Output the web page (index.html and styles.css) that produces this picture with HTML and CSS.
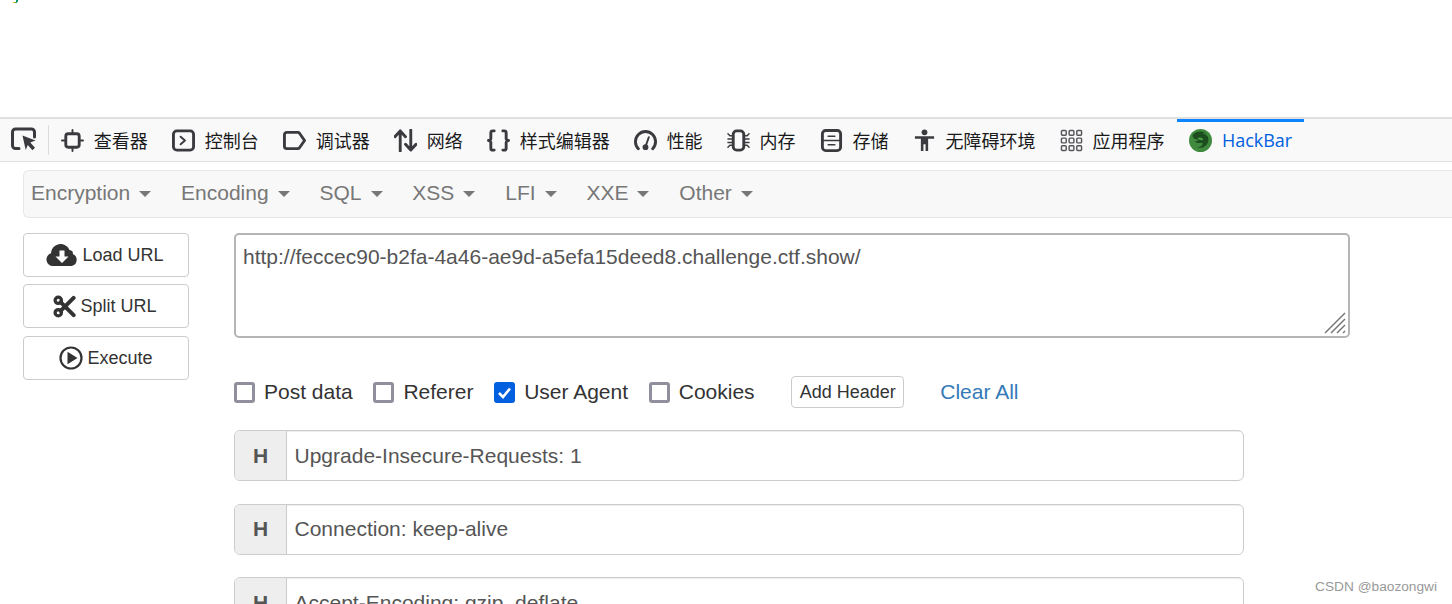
FILE: index.html
```html
<!DOCTYPE html>
<html lang="zh">
<head>
<meta charset="utf-8">
<title>HackBar</title>
<link rel="stylesheet" href="styles.css">
</head>
<body>
<div class="page-top">
  <svg class="top-mark" width="5" height="3" viewBox="0 0 5 3"><rect x="3" width="2" height="2" fill="#0a9a78"/><rect y="2" width="2" height="1" fill="#e0b020"/><rect x="2" y="2" width="2" height="1" fill="#3aa040"/></svg>
</div>
<div class="toolbar">
  <div class="picker">
    <svg class="ico-picker" width="26" height="24" viewBox="0 0 26 24"><path d="M8 21.500H4.500a3 3 0 0 1-3-3V5a3 3 0 0 1 3-3h16a3 3 0 0 1 3 3v5" class="st bold"/><path d="M11.500 8.500l13 5-5.200 2.100 4.700 5.200-2.600 2.400-4.600-5.200-2.100 5z" class="fi"/></svg>
  </div>
  <div class="tab">
    <svg class="ico" viewBox="0 0 24 24"><rect x="5" y="5" width="14" height="14" rx="2.500" class="st bold"/><path d="M12 1v4M12 19v4M1 12h4M19 12h4" class="st thin"/></svg>
    <span>查看器</span>
  </div>
  <div class="tab">
    <svg class="ico" viewBox="0 0 24 24"><rect x="1.500" y="2" width="21" height="20" rx="3.500" class="st bold"/><path d="M9 8l4.500 4L9 16" class="st thin"/></svg>
    <span>控制台</span>
  </div>
  <div class="tab">
    <svg class="ico" viewBox="0 0 24 24"><path d="M4 3.500h11.500a2 2 0 0 1 1.500.700L22.500 12 17 19.800a2 2 0 0 1-1.500.700H4A2.500 2.500 0 0 1 1.500 18V6A2.500 2.500 0 0 1 4 3.500z" class="st bold"/></svg>
    <span>调试器</span>
  </div>
  <div class="tab">
    <svg class="ico" viewBox="0 0 24 24"><path d="M6.500 23V2M1 8l5.500-6L12 8M17.500 1v21M12 16l5.500 6L23 16" class="st bold"/></svg>
    <span>网络</span>
  </div>
  <div class="tab">
    <svg class="ico" viewBox="0 0 24 24"><path d="M7.500 2H6a2 2 0 0 0-2 2v5a2.500 2.500 0 0 1-2.500 3A2.500 2.500 0 0 1 4 15v5a2 2 0 0 0 2 2h1.500M16.500 2H18a2 2 0 0 1 2 2v5a2.500 2.500 0 0 0 2.500 3A2.500 2.500 0 0 0 20 15v5a2 2 0 0 1-2 2h-1.500" class="st bold"/></svg>
    <span>样式编辑器</span>
  </div>
  <div class="tab">
    <svg class="ico" viewBox="0 0 24 24"><path d="M4.500 20.500A10.500 10.500 0 1 1 19.500 20.500" class="st bold"/><path d="M15.500 8.500L12.500 17" class="st thin"/><circle cx="12" cy="19" r="3" class="fi"/></svg>
    <span>性能</span>
  </div>
  <div class="tab">
    <svg class="ico" viewBox="0 0 24 24"><rect x="6.500" y="2" width="11" height="20" rx="3.500" class="st bold"/><path d="M6 7H3L1 5M6 10.500H1M6 14H1M6 17H3L1 19M18 7h3l2-2M18 10.500h5M18 14h5M18 17h3l2 2" class="st hair"/></svg>
    <span>内存</span>
  </div>
  <div class="tab">
    <svg class="ico" viewBox="0 0 24 24"><rect x="2.500" y="1.500" width="19" height="21" rx="3.500" class="st bold"/><path d="M8.500 7.500h7M8.500 16.500h7M3 12h18" class="st hair"/></svg>
    <span>存储</span>
  </div>
  <div class="tab">
    <svg class="ico" viewBox="0 0 24 24"><circle cx="12" cy="3.500" r="3" class="fi"/><path d="M2 7.500h20v2.800h-6.200V23h-2.700v-7h-2.200v7H8.200V10.300H2z" class="fi"/></svg>
    <span>无障碍环境</span>
  </div>
  <div class="tab">
    <svg class="ico" viewBox="0 0 24 24"><g class="st hair grey"><rect x="1.500" y="1.500" width="5" height="5" rx="1"/><rect x="9.500" y="1.500" width="5" height="5" rx="1"/><rect x="17.500" y="1.500" width="5" height="5" rx="1"/><rect x="1.500" y="9.500" width="5" height="5" rx="1"/><rect x="9.500" y="9.500" width="5" height="5" rx="1"/><rect x="17.500" y="9.500" width="5" height="5" rx="1"/><rect x="1.500" y="17.500" width="5" height="5" rx="1"/><rect x="9.500" y="17.500" width="5" height="5" rx="1"/><rect x="17.500" y="17.500" width="5" height="5" rx="1"/></g></svg>
    <span>应用程序</span>
  </div>
  <div class="tab tab-active">
    <svg class="ico" viewBox="0 0 24 24"><circle cx="12" cy="12" r="12" fill="#3f8a3c"/><path d="M4 6c4-5 12-4 15-1-2-1-4-1-5 0 5 0 7 4 6 8-1 5-7 8-12 6 4 0 7-2 6-5-2 1-6 1-8-1 2 0 4-1 4-2-4 0-7-2-6-5z" fill="#1b4d1e"/><path d="M9 10c2-2 5-1 6 1-1 1-4 1-6-1z" fill="#4f9f48"/></svg>
    <span class="tab-label-latin">HackBar</span>
  </div>
</div>

<div class="panel">
  <nav class="menubar">
    <div class="menu">Encryption<i class="caret"></i></div>
    <div class="menu">Encoding<i class="caret"></i></div>
    <div class="menu">SQL<i class="caret"></i></div>
    <div class="menu">XSS<i class="caret"></i></div>
    <div class="menu">LFI<i class="caret"></i></div>
    <div class="menu">XXE<i class="caret"></i></div>
    <div class="menu">Other<i class="caret"></i></div>
  </nav>
  <div class="workspace">
    <aside class="actions">
      <div class="btn">
        <svg class="btn-ico cloud" viewBox="0 0 32 24"><path d="M7 23a6.500 6.500 0 0 1-2-12.700C5.300 4.500 10 1 14.500 1c4 0 7.500 2.500 9 6a5 5 0 0 1 3 1.500c.5 1.300.5 1.800.3 2.500A6.300 6.300 0 0 1 25.500 23z" fill="#333"/><path d="M13.500 7.500h5v6h4L16 20l-6.500-6.500h4z" fill="#fff"/></svg>
        <span>Load URL</span>
      </div>
      <div class="btn">
        <svg class="btn-ico scissors" viewBox="0 0 24 24"><circle cx="5.500" cy="5.500" r="3.300" fill="none" stroke="#333" stroke-width="3.400"/><circle cx="5.500" cy="18.500" r="3.300" fill="none" stroke="#333" stroke-width="3.400"/><path d="M8 7.500L21.500 21M8 16.500L21.500 3" fill="none" stroke="#333" stroke-width="4.200" stroke-linecap="round"/></svg>
        <span>Split URL</span>
      </div>
      <div class="btn">
        <svg class="btn-ico play" viewBox="0 0 24 24"><circle cx="12" cy="12" r="10.500" fill="none" stroke="#333" stroke-width="2.200"/><path d="M8.500 5.800L18.500 12l-10 6.200z" fill="#333"/></svg>
        <span>Execute</span>
      </div>
    </aside>
    <section class="form">
      <div class="url-box">
        <span>http://feccec90-b2fa-4a46-ae9d-a5efa15deed8.challenge.ctf.show/</span>
        <svg class="grip" width="24" height="24" viewBox="0 0 24 24"><path d="M2 22L22 2M8 22L22 8M14 22l8-8M20 22l2-2" fill="none" stroke="#777" stroke-width="1.500"/></svg>
      </div>
      <div class="options">
        <label class="check"><span class="box"></span>Post data</label>
        <label class="check"><span class="box"></span>Referer</label>
        <label class="check"><span class="box box-on"><svg width="21" height="21" viewBox="0 0 21 21"><path d="M5 11l4 4 7-8.500" fill="none" stroke="#fff" stroke-width="2.600"/></svg></span>User Agent</label>
        <label class="check check-last"><span class="box"></span>Cookies</label>
        <div class="add-header">Add Header</div>
        <a class="clear">Clear All</a>
      </div>
      <div class="headers">
        <div class="header-row"><b class="addon">H</b><div class="field">Upgrade-Insecure-Requests: 1</div></div>
        <div class="header-row"><b class="addon">H</b><div class="field">Connection: keep-alive</div></div>
        <div class="header-row"><b class="addon">H</b><div class="field">Accept-Encoding: gzip, deflate</div></div>
      </div>
    </section>
  </div>
</div>
<div class="watermark">CSDN @baozongwi</div>
</body>
</html>
```
FILE: styles.css
```css
* { box-sizing: border-box; }
html, body { margin: 0; padding: 0; height: 604px; overflow: hidden; background: #fff; }
body { font-family: "Liberation Sans", Arial, sans-serif; position: relative; color: #333; }

.page-top { height: 117px; padding-left: 13px; line-height: 0; }
.top-mark { display: block; }

.toolbar {
  height: 45px;
  display: flex;
  align-items: stretch;
  background: #f9f9fa;
  border-top: 2px solid #e0e0e2;
  border-bottom: 1px solid #e0e0e2;
  font-family: "Noto Sans CJK SC", "Liberation Sans", sans-serif;
  font-size: 18px;
  color: #1a1a1a;
}
.picker { width: 49px; padding-left: 11px; padding-bottom: 2px; display: flex; align-items: center; position: relative; }
.picker::after { content: ""; position: absolute; right: 0; top: 6px; bottom: 6px; width: 1px; background: #dcdcdc; }
.ico-picker { display: block; }
.tab { display: flex; align-items: center; gap: 9.6px; padding: 0 12.2px 2px; white-space: nowrap; border-top: 3px solid transparent; }
.tab > span { position: relative; top: -1px; }
.ico { width: 23px; height: 23px; flex: none; }
.st { fill: none; stroke: #3b3b3f; stroke-width: 2.600; stroke-linecap: round; stroke-linejoin: round; }
.bold { stroke-width: 3; }
.thin { stroke-width: 2; }
.hair { stroke-width: 1.500; }
.grey { stroke: #55555a; }
.fi { fill: #3b3b3f; }
.tab-active { border-top-color: #0a84ff; gap: 10px; padding-right: 12px; color: #0060df; }
.tab-label-latin { font-family: "Open Sans", sans-serif; font-size: 18px; }

.panel { padding: 8px 0 0 23px; }
.menubar {
  height: 48px;
  display: flex;
  align-items: center;
  gap: 29.85px;
  padding-left: 7px;
  padding-bottom: 2px;
  background: #f8f8f8;
  border: 1px solid #e7e7e7;
  border-right: 0;
  border-radius: 6px 0 0 6px;
  font-size: 21px;
  color: #777;
}
.menu { display: flex; align-items: center; white-space: nowrap; }
.caret { margin: 2px 0 0 9px; width: 0; height: 0; border-top: 6px solid #777; border-left: 6px solid transparent; border-right: 6px solid transparent; }

.workspace { display: flex; margin-top: 15px; gap: 45px; }
.actions { width: 166px; flex: none; display: flex; flex-direction: column; }
.btn {
  height: 44px;
  flex: none;
  display: flex;
  align-items: center;
  justify-content: center;
  gap: 4px;
  border: 1px solid #ccc;
  border-radius: 4px;
  background: #fff;
  font-size: 18px;
  color: #333;
}
.btn + .btn { margin-top: 7px; }
.btn:last-child { margin-top: 8px; }
.btn-ico { flex: none; }
.cloud { width: 32px; height: 24px; margin-left: -2px; }
.scissors { width: 23px; height: 23px; margin-left: -2px; }
.play { width: 24px; height: 24px; }

.form { width: 1116px; flex: none; }
.url-box {
  height: 105px;
  padding: 8px 7px;
  border: 2px solid #b5b5b5;
  border-radius: 5px;
  font-size: 21px;
  line-height: 28px;
  color: #555;
  position: relative;
}
.grip { position: absolute; right: 1px; bottom: 1px; }

.options { display: flex; align-items: center; height: 32px; margin-top: 38px; font-size: 21px; color: #333; }
.check { display: flex; align-items: center; gap: 9px; margin-right: 20.7px; white-space: nowrap; }
.check-last { margin-right: 36.6px; }
.box { width: 21px; height: 21px; border: 3px solid #8f8f9d; border-radius: 3px; background: #fff; display: block; flex: none; position: relative; }
.box-on { background: #0060df; border-color: #0060df; }
.box-on svg { position: absolute; left: -3px; top: -3px; }
.add-header { height: 32px; padding: 0 7.5px; display: flex; align-items: center; border: 1px solid #ccc; border-radius: 4px; font-size: 18px; color: #333; }
.clear { margin-left: 36px; color: #337ab7; }

.headers { margin-top: 22px; width: 1010px; display: flex; flex-direction: column; gap: 22.5px; }
.header-row { display: flex; height: 51px; flex: none; border: 1px solid #ccc; border-radius: 6px; overflow: hidden; font-size: 21px; color: #555; }
.addon { width: 52px; flex: none; display: flex; align-items: center; justify-content: center; background: #eee; border-right: 1px solid #ccc; }
.field { flex: 1; display: flex; align-items: center; padding-left: 7.5px; box-shadow: inset 0 1px 1px rgba(0,0,0,.075); white-space: nowrap; }

.watermark { position: absolute; right: 15px; top: 579px; font-size: 13.7px; line-height: 16px; color: #999; background: rgba(255,255,255,.6); }
```
